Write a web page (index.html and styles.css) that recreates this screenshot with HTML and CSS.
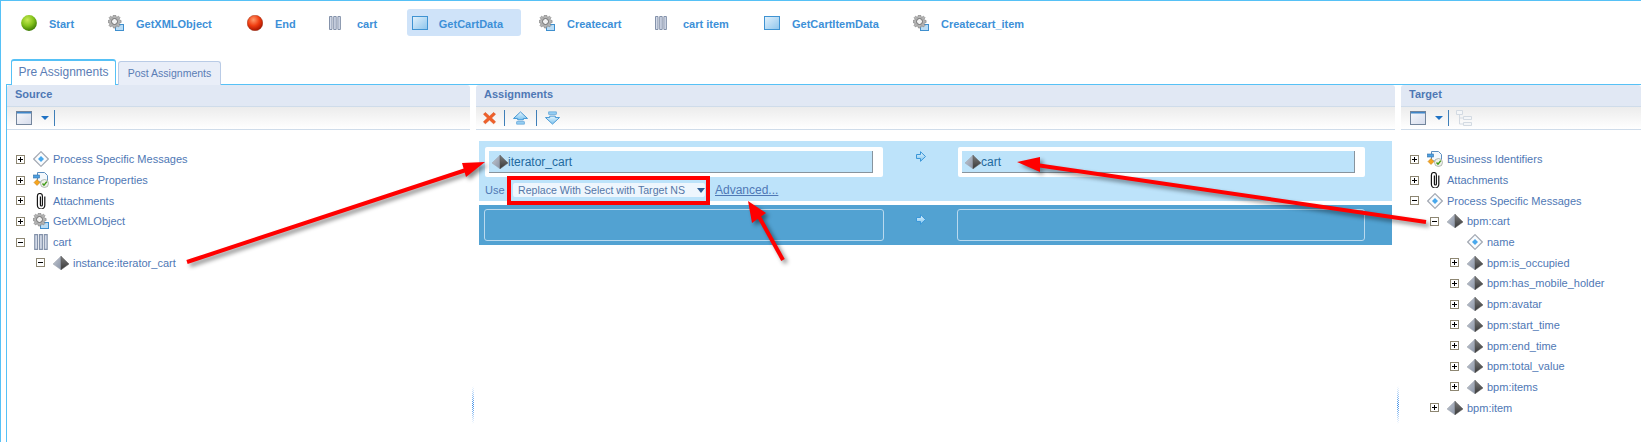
FILE: index.html
```html
<!DOCTYPE html>
<html lang="en">
<head>
<meta charset="utf-8">
<title>Assignments</title>
<link rel="stylesheet" href="styles.css">
</head>
<body>
<svg class="sprite" aria-hidden="true">
  <defs>
    <radialGradient id="gGreen" cx="40%" cy="30%" r="70%"><stop offset="0" stop-color="#c8ea55"/><stop offset=".55" stop-color="#84c31c"/><stop offset="1" stop-color="#3f7d05"/></radialGradient>
    <radialGradient id="gRed" cx="40%" cy="30%" r="70%"><stop offset="0" stop-color="#ff9a6a"/><stop offset=".55" stop-color="#f03c10"/><stop offset="1" stop-color="#a81500"/></radialGradient>
    <linearGradient id="gWin" x1="0" y1="0" x2="1" y2="1"><stop offset="0" stop-color="#e4f2fc"/><stop offset="1" stop-color="#8cc4ec"/></linearGradient>
    <linearGradient id="gWinGrey" x1="0" y1="0" x2="1" y2="1"><stop offset="0" stop-color="#f8f9fc"/><stop offset="1" stop-color="#d5dcec"/></linearGradient>
    <linearGradient id="gPyrL" x1="0" y1="0" x2="1" y2="1"><stop offset="0" stop-color="#c4c9d1"/><stop offset="1" stop-color="#8993a6"/></linearGradient>
    <linearGradient id="gPyrR" x1="0" y1="0" x2="0" y2="1"><stop offset="0" stop-color="#7c7c7c"/><stop offset="1" stop-color="#383838"/></linearGradient>
    <linearGradient id="gArrow" x1="0" y1="0" x2="0" y2="1"><stop offset="0" stop-color="#e6f5fd"/><stop offset="1" stop-color="#7cc4f0"/></linearGradient>
    <symbol id="i-start" viewBox="0 0 16 16"><circle cx="8" cy="8" r="7.9" fill="url(#gGreen)"/></symbol>
    <symbol id="i-end" viewBox="0 0 16 16"><circle cx="8" cy="8" r="7.8" fill="url(#gRed)" stroke="#8a2a10" stroke-width=".4"/></symbol>
    <symbol id="i-gear" viewBox="0 0 16 16">
      <rect x="7.5" y="9.5" width="8" height="6" fill="#b9dcf5" stroke="#3f8fce"/>
      <path d="M5.4 0h2.2l.3 1.7 1.1.5L10.500 1.200 12 2.700 11 4.100l.5 1.100 1.600.3v2.100l-1.600.3-.5 1.100 1 1.400-1.500 1.500L9 10.900l-1.100.5-.3 1.600H5.400l-.3-1.600-1.100-.5-1.500 1-1.500-1.500 1-1.400-.5-1.100L0 7.600V5.500l1.600-.3.5-1.100-1-1.400 1.500-1.500L4 2.200l1.100-.5z" fill="#b4b4b4" stroke="#7c7c7c" stroke-width=".6"/>
      <circle cx="6.500" cy="6.500" r="3" fill="#f2f2f2" stroke="#6c6c6c" stroke-width="1"/>
    </symbol>
    <symbol id="i-each" viewBox="0 0 12 14">
      <path d="M.5.5h2.500v13H.5zM4.700.5h2.500v13H4.700zM8.900.5h2.500v13H8.900z" fill="#d3dae8" stroke="#8492aa"/>
    </symbol>
    <symbol id="i-window" viewBox="0 0 16 14"><rect x=".5" y=".5" width="15" height="13" fill="url(#gWin)" stroke="#3f93d2"/></symbol>
    <symbol id="i-winbar" viewBox="0 0 16 14"><rect x=".5" y=".5" width="15" height="13" fill="url(#gWinGrey)" stroke="#73859c"/><rect x="1" y="1" width="14" height="1.500" fill="#3f86c8"/></symbol>
    <symbol id="i-pyr" viewBox="0 0 16 14"><path d="M8 .2 0 8 8 13.800z" fill="url(#gPyrL)" stroke="#9aa0aa" stroke-width=".5"/><path d="M8 .2 16 8 8 13.800z" fill="url(#gPyrR)" stroke="#555" stroke-width=".5"/></symbol>
    <symbol id="i-msg" viewBox="0 0 16 16">
      <path d="M8 .7 15.300 8 8 15.300.7 8z" fill="#fafcfe" stroke="#a3a9b3" stroke-width="1.200"/>
      <path d="M8 5 11 8 8 11 5 8z" fill="#49a8ec"/>
    </symbol>
    <symbol id="i-props" viewBox="0 0 16 16">
      <path d="M4.500.5h7l3 3V10h-10z" fill="#f4f8fc" stroke="#5c8fc0"/>
      <rect x=".5" y="3" width="6" height="3" fill="#4d9fe0" stroke="#2f6ea8" stroke-width=".6"/>
      <path d="M4 7.500 7 10.500 4 13.500 1 10.500z" fill="#f6a51e" stroke="#b8720e" stroke-width=".5"/>
      <circle cx="11.500" cy="11.500" r="4" fill="#eef0ea" stroke="#9aa098" stroke-width=".7"/>
      <path d="M9.500 11.500 11 13.200 13.800 9.600" fill="none" stroke="#3f9a16" stroke-width="1.400"/>
    </symbol>
    <symbol id="i-clip" viewBox="0 0 16 16">
      <path d="M11.800 3.500v8.800a3.700 3.700 0 0 1-7.400 0V3a2.500 2.500 0 0 1 5 0v9a1 1 0 0 1-2 0V3.500" fill="none" stroke="#161616" stroke-width="1.200"/>
    </symbol>
    <symbol id="i-del" viewBox="0 0 14 14">
      <path d="M2.500 1 7 5 11.500 1 13.500 3 9.200 7 13.500 11 11.500 13.300 7 9.200 2.500 13.300.5 11 4.800 7 .5 3z" fill="#f0602a" stroke="#d64a16" stroke-width=".6"/>
    </symbol>
    <symbol id="i-up" viewBox="0 0 16 14">
      <path d="M8 .5 15.500 7.500H11V9H5V7.500H.5z" fill="url(#gArrow)" stroke="#3f93d2"/>
      <rect x="4" y="11" width="8" height="2.500" fill="#9ed3f5" stroke="#3f93d2" stroke-width=".7"/>
    </symbol>
    <symbol id="i-down" viewBox="0 0 16 14">
      <rect x="4" y=".5" width="8" height="2.500" fill="#9ed3f5" stroke="#3f93d2" stroke-width=".7"/>
      <path d="M8 13.500 15.500 6.500H11V5H5V6.500H.5z" fill="url(#gArrow)" stroke="#3f93d2"/>
    </symbol>
    <symbol id="i-tree" viewBox="0 0 16 16">
      <path d="M.5.500h6v4h-6zM7.500 6.500h8v3h-8zM7.500 12.500h8v3h-8z" fill="#f4f6f8" stroke="#d3dae2"/>
      <path d="M3.500 5v9h4M3.500 8h4" fill="none" stroke="#d3dae2"/>
    </symbol>
    <symbol id="i-go" viewBox="0 0 10 11"><path d="M.5 3.500H4.500V.7L9.500 5.500 4.500 10.300V7.500H.5z" fill="url(#gArrow)" stroke="#3b97d8"/></symbol>
  </defs>
</svg>

<div class="app">
  <nav class="steps">
    <a class="step"><span class="step-icon"><svg class="ico16"><use href="#i-start"/></svg></span><span class="step-label">Start</span></a>
    <a class="step"><span class="step-icon"><svg class="ico16"><use href="#i-gear"/></svg></span><span class="step-label">GetXMLObject</span></a>
    <a class="step"><span class="step-icon"><svg class="ico16"><use href="#i-end"/></svg></span><span class="step-label">End</span></a>
    <a class="step"><span class="step-icon"><svg class="ico-each"><use href="#i-each"/></svg></span><span class="step-label">cart</span></a>
    <a class="step step-active"><span class="step-icon"><svg class="ico-win"><use href="#i-window"/></svg></span><span class="step-label">GetCartData</span></a>
    <a class="step"><span class="step-icon"><svg class="ico16"><use href="#i-gear"/></svg></span><span class="step-label">Createcart</span></a>
    <a class="step"><span class="step-icon"><svg class="ico-each"><use href="#i-each"/></svg></span><span class="step-label">cart item</span></a>
    <a class="step"><span class="step-icon"><svg class="ico-win"><use href="#i-window"/></svg></span><span class="step-label">GetCartItemData</span></a>
    <a class="step"><span class="step-icon"><svg class="ico16"><use href="#i-gear"/></svg></span><span class="step-label">Createcart_item</span></a>
  </nav>

  <div class="tabs">
    <div class="tab tab-active">Pre Assignments</div>
    <div class="tab">Post Assignments</div>
  </div>

  <main class="workspace">
    <section class="panel panel-source">
      <h2 class="panel-title">Source</h2>
      <div class="toolbar">
        <svg class="ico-tool"><use href="#i-winbar"/></svg>
        <span class="caret caret-tool"></span>
        <span class="sep sep-tight"></span>
      </div>
      <ul class="tree">
        <li class="row"><span class="exp plus"></span><svg class="ico16"><use href="#i-msg"/></svg><span>Process Specific Messages</span></li>
        <li class="row"><span class="exp plus"></span><svg class="ico16"><use href="#i-props"/></svg><span>Instance Properties</span></li>
        <li class="row"><span class="exp plus"></span><svg class="ico16"><use href="#i-clip"/></svg><span>Attachments</span></li>
        <li class="row"><span class="exp plus"></span><svg class="ico16"><use href="#i-gear"/></svg><span>GetXMLObject</span></li>
        <li class="row"><span class="exp"></span><svg class="ico16"><use href="#i-each"/></svg><span>cart</span></li>
        <li class="row lvl1"><span class="exp"></span><svg class="ico-pyr"><use href="#i-pyr"/></svg><span>instance:iterator_cart</span></li>
      </ul>
    </section>

    <div class="gutter"><span class="grip"></span></div>

    <section class="panel panel-assign">
      <h2 class="panel-title">Assignments</h2>
      <div class="toolbar toolbar-assign">
        <svg class="ico-del"><use href="#i-del"/></svg>
        <span class="sep"></span>
        <svg class="ico-move"><use href="#i-up"/></svg>
        <span class="sep"></span>
        <svg class="ico-move"><use href="#i-down"/></svg>
      </div>
      <div class="assign-list">
        <div class="assign assign-selected">
          <div class="assign-cell">
            <div class="slot">
              <div class="field"><svg class="ico-pyr"><use href="#i-pyr"/></svg><span>iterator_cart</span></div>
            </div>
            <div class="use-line">
              <span class="use-label">Use</span>
              <div class="select">Replace With Select with Target NS<span class="caret"></span></div>
              <a class="advanced">Advanced...</a>
            </div>
          </div>
          <div class="assign-go"><svg class="ico-go"><use href="#i-go"/></svg></div>
          <div class="slot slot-right">
            <div class="field"><svg class="ico-pyr"><use href="#i-pyr"/></svg><span>cart</span></div>
          </div>
        </div>
        <div class="assign assign-empty">
          <div class="empty-slot"></div>
          <div class="assign-go"><svg class="ico-go"><use href="#i-go"/></svg></div>
          <div class="empty-slot"></div>
        </div>
      </div>
    </section>

    <div class="gutter"><span class="grip"></span></div>

    <section class="panel panel-target">
      <h2 class="panel-title">Target</h2>
      <div class="toolbar">
        <svg class="ico-tool"><use href="#i-winbar"/></svg>
        <span class="caret caret-tool"></span>
        <span class="sep sep-tight"></span>
        <svg class="ico-tree"><use href="#i-tree"/></svg>
      </div>
      <ul class="tree">
        <li class="row"><span class="exp plus"></span><svg class="ico16"><use href="#i-props"/></svg><span>Business Identifiers</span></li>
        <li class="row"><span class="exp plus"></span><svg class="ico16"><use href="#i-clip"/></svg><span>Attachments</span></li>
        <li class="row"><span class="exp"></span><svg class="ico16"><use href="#i-msg"/></svg><span>Process Specific Messages</span></li>
        <li class="row lvl1"><span class="exp"></span><svg class="ico-pyr"><use href="#i-pyr"/></svg><span>bpm:cart</span></li>
        <li class="row lvl2"><span class="exp-none"></span><svg class="ico16"><use href="#i-msg"/></svg><span>name</span></li>
        <li class="row lvl2"><span class="exp plus"></span><svg class="ico-pyr"><use href="#i-pyr"/></svg><span>bpm:is_occupied</span></li>
        <li class="row lvl2"><span class="exp plus"></span><svg class="ico-pyr"><use href="#i-pyr"/></svg><span>bpm:has_mobile_holder</span></li>
        <li class="row lvl2"><span class="exp plus"></span><svg class="ico-pyr"><use href="#i-pyr"/></svg><span>bpm:avatar</span></li>
        <li class="row lvl2"><span class="exp plus"></span><svg class="ico-pyr"><use href="#i-pyr"/></svg><span>bpm:start_time</span></li>
        <li class="row lvl2"><span class="exp plus"></span><svg class="ico-pyr"><use href="#i-pyr"/></svg><span>bpm:end_time</span></li>
        <li class="row lvl2"><span class="exp plus"></span><svg class="ico-pyr"><use href="#i-pyr"/></svg><span>bpm:total_value</span></li>
        <li class="row lvl2"><span class="exp plus"></span><svg class="ico-pyr"><use href="#i-pyr"/></svg><span>bpm:items</span></li>
        <li class="row lvl1"><span class="exp plus"></span><svg class="ico-pyr"><use href="#i-pyr"/></svg><span>bpm:item</span></li>
      </ul>
    </section>
  </main>
</div>

<svg class="notes" viewBox="0 0 1641 442" aria-hidden="true">
  <rect class="note-box" x="509" y="178" width="199" height="25"/>
  <g class="note-arrow">
    <path class="note-shaft" d="M187 262 472 168"/>
    <path class="note-head" d="M485 162 462 163 466 177z"/>
  </g>
  <g class="note-arrow">
    <path class="note-shaft" d="M1426 222 1036 165"/>
    <path class="note-head" d="M1017 162 1040 157 1040 172z"/>
  </g>
  <g class="note-arrow">
    <path class="note-shaft" d="M783 260 758 215"/>
    <path class="note-head" d="M748 201 766 213 752 223z"/>
  </g>
</svg>
</body>
</html>
```
FILE: styles.css
```css
* { box-sizing: border-box; }

html, body {
  margin: 0;
  padding: 0;
  height: 442px;
  overflow: hidden;
  background: #fff;
}

body {
  position: relative;
  font-family: "Liberation Sans", Arial, sans-serif;
  font-size: 11px;
  color: #4f78b5;
}

.sprite { display: block; width: 0; height: 0; }

svg { display: block; flex: none; }

.ico16 { width: 16px; height: 16px; }
.ico-each { width: 12px; height: 14px; }
.ico-win { width: 16px; height: 14px; }
.ico-pyr { width: 16px; height: 14px; }
.ico-tool { width: 16px; height: 14px; }
.ico-move { width: 15px; height: 14px; }
.ico-del { width: 13px; height: 14px; }
.ico-tree { width: 16px; height: 16px; margin-left: 7px; }
.ico-go { width: 10px; height: 11px; }

.app {
  height: 442px;
  border-top: 1px solid #56c1f6;
  border-left: 1px solid #56c1f6;
  display: flex;
  flex-direction: column;
}

/* process steps */
.steps {
  display: grid;
  grid-template-columns: 87px 139px 82px 83px 127px 116px 109px 149px auto;
  height: 59px;
  padding: 8px 0 0 15px;
  align-items: start;
}

.step {
  display: flex;
  align-items: center;
  height: 27px;
  padding: 0 18px 0 4px;
  justify-self: start;
  border-radius: 3px;
  font-weight: bold;
  font-size: 11px;
  color: #3d90d8;
}

.step-active { background: #cfe3f9; width: 114px; }

.step-icon {
  width: 29px;
  display: flex;
  padding-left: 1px;
}

.step-label { padding-top: 3px; white-space: nowrap; }

/* tabs */
.tabs {
  display: flex;
  align-items: flex-end;
  gap: 2px;
  height: 25px;
  margin-left: 10px;
  position: relative;
  z-index: 1;
  margin-bottom: -1px;
}

.tab {
  height: 24px;
  width: 103px;
  display: flex;
  align-items: center;
  justify-content: center;
  background: #e9eef8;
  border: 1px solid #b9cbe6;
  border-bottom: 0;
  border-radius: 3px 3px 0 0;
  color: #5a7db5;
  font-size: 10.5px;
  padding-bottom: 2px;
}

.tab-active {
  height: 26px;
  width: 105px;
  background: #fff;
  border: 1px solid #56c1f6;
  border-top-width: 2px;
  border-bottom: 0;
  font-size: 12px;
}

/* workspace */
.workspace {
  flex: 1;
  min-height: 0;
  margin-left: 5px;
  border-top: 1px solid #56c1f6;
  border-left: 1px solid #56c1f6;
  display: flex;
}

.panel { display: flex; flex-direction: column; }
.panel-source { width: 463px; }
.panel-assign { width: 919px; }
.panel-target { flex: 1; min-width: 0; }

.panel-title {
  margin: 0;
  height: 22px;
  padding: 1px 0 0 8px;
  background: #e1e8f4;
  border-bottom: 1px solid #cfdcea;
  border-radius: 3px 3px 0 0;
  font-size: 11px;
  line-height: 16px;
  font-weight: bold;
  color: #4f78b5;
}

.toolbar {
  height: 23px;
  display: flex;
  align-items: center;
  padding-left: 9px;
  background: linear-gradient(#ececec, #fff);
  border-bottom: 1px solid #cfdcea;
}

.toolbar-assign { padding-left: 7px; }

.sep {
  width: 1px;
  height: 16px;
  margin: 0 8px;
  background: #3f7fb8;
}

.sep-tight { margin: 0; margin-left: 5px; }

.caret {
  width: 0;
  height: 0;
  border-left: 4.5px solid transparent;
  border-right: 4.5px solid transparent;
  border-top: 5px solid #2f5f96;
}

.caret-tool {
  margin-left: 9px;
  border-left-width: 4px;
  border-right-width: 4px;
  border-top: 4px solid #1f72c4;
}

/* tree */
.tree {
  list-style: none;
  margin: 0;
  padding: 19px 0 0 9px;
}

.row {
  display: flex;
  align-items: center;
  height: 20.7px;
  white-space: nowrap;
}

.row > svg { margin-left: 8px; margin-right: 4px; }
.lvl1 { margin-left: 20px; }
.lvl2 { margin-left: 40px; }

.exp, .exp-none { width: 9px; height: 9px; flex: none; }

.exp {
  border: 1px solid #8d8672;
  background:
    linear-gradient(#000, #000) center / 5px 1px no-repeat,
    #fff;
}

.exp.plus {
  background:
    linear-gradient(#000, #000) center / 5px 1px no-repeat,
    linear-gradient(#000, #000) center / 1px 5px no-repeat,
    #fff;
}

/* assignments */
.assign-list {
  padding: 11px 0 0 3px;
  display: flex;
  flex-direction: column;
  gap: 4px;
}

.assign {
  width: 913px;
  display: grid;
}

.assign-selected {
  height: 60px;
  grid-template-columns: 398px 75px 407px;
  padding: 6px 0 0 6px;
  background: #bde3fa;
}

.assign-empty {
  height: 40px;
  grid-template-columns: 400px 73px 408px;
  padding: 4px 0 0 5px;
  background: #52a2d2;
}

.assign-go {
  display: flex;
  justify-content: center;
  padding-top: 4px;
  padding-left: 1px;
}

.assign-empty .assign-go { padding-top: 5px; }

.slot {
  height: 30px;
  background: #fff;
  border-radius: 2px;
  padding: 4px 10px 4px 4px;
}

.field {
  height: 22px;
  display: flex;
  align-items: center;
  gap: 0;
  padding-left: 3px;
  background: #bde3fa;
  border-right: 1px solid #87949e;
  border-bottom: 1px solid #87949e;
  font-size: 12px;
  color: #1f6a9e;
}

.empty-slot {
  height: 32px;
  border: 1px solid #b9d9ee;
  border-radius: 3px;
}

.use-line {
  display: flex;
  align-items: flex-start;
  margin-top: 6px;
}

.use-label { width: 28px; line-height: 14px; font-size: 11px; }

.select {
  width: 192px;
  height: 14px;
  display: flex;
  align-items: center;
  justify-content: space-between;
  padding-left: 5px;
  background: #eef6fd;
  border-radius: 2px;
  font-size: 10.6px;
  color: #5577a8;
  white-space: nowrap;
}

.advanced {
  margin-left: 10px;
  font-size: 12px;
  line-height: 14px;
  text-decoration: underline;
  color: #4f78b5;
}

/* resize gutters */
.gutter {
  width: 6px;
  flex: none;
  padding: 301px 2px 0;
}

.grip {
  display: block;
  width: 2px;
  height: 38px;
  background: repeating-conic-gradient(#3f8fe8 0 25%, transparent 0 50%) 0 0 / 2px 2px;
  -webkit-mask-image: linear-gradient(transparent, #000 50%, transparent);
  mask-image: linear-gradient(transparent, #000 50%, transparent);
}

/* red annotations drawn over the screenshot */
.notes {
  position: absolute;
  left: 0;
  top: 0;
  width: 1641px;
  height: 442px;
  pointer-events: none;
}

.note-box { fill: none; stroke: #f00; stroke-width: 4; }
.note-arrow { filter: drop-shadow(3px 3px 2px rgba(0, 0, 0, .45)); }
.note-shaft { fill: none; stroke: #f00; stroke-width: 4; }
.note-head { fill: #f00; }
```
